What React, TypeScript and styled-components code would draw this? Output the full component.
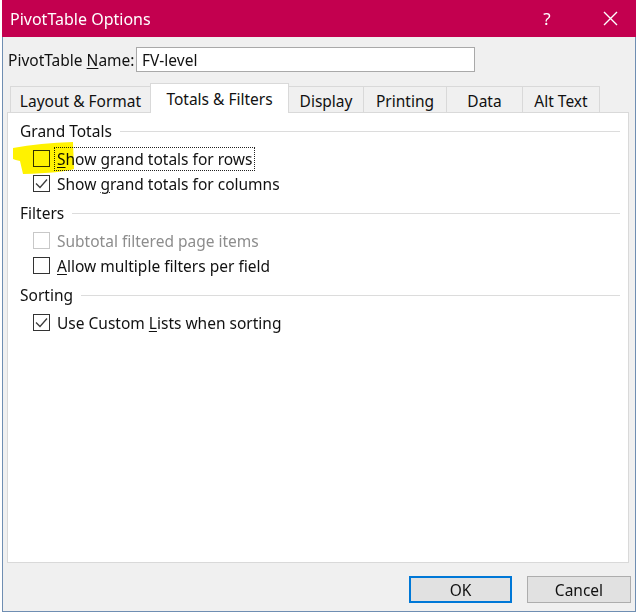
import React from 'react'
import styled, { createGlobalStyle } from 'styled-components'

const GlobalStyle = createGlobalStyle`
	html, body {
		margin: 0;
		padding: 0;
		background: #fff;
	}
	body {
		font-family: 'Noto Sans', 'Open Sans', sans-serif;
		font-size: 15.5px;
		color: #111;
	}
	u {
		text-decoration-thickness: 1px;
		text-underline-offset: 2px;
	}
`

const Window = styled.div`
	margin-left: 2px;
	width: 634px;
	height: 612px;
	box-sizing: border-box;
	border: 1px solid #6f8eb2;
	border-top: none;
	background: #f0f0f0;
	display: flex;
	flex-direction: column;
`
const TitleBar = styled.div`
	flex: none;
	height: 37px;
	margin: 0 -1px;
	background: #c3004f;
	color: #fff;
	display: flex;
	align-items: center;
	padding-left: 8px;
	font-size: 16px;
`
const Title = styled.div`
	flex: 1;
`
const TitleButton = styled.div<{ $w: number }>`
	width: ${p => p.$w}px;
	height: 37px;
	display: flex;
	align-items: center;
	justify-content: center;
	font-size: 17px;
`
const NameRow = styled.div`
	display: flex;
	align-items: center;
	height: 25px;
	margin: 10px 0 0 5px;
`
const NameLabel = styled.div`
	width: 128px;
`
const NameInput = styled.div`
	width: 339px;
	height: 25px;
	box-sizing: border-box;
	border: 1px solid #a9a9a9;
	background: #fff;
	padding-left: 5px;
	display: flex;
	align-items: center;
`
const TabStrip = styled.div`
	display: flex;
	align-items: flex-end;
	height: 30px;
	margin: 11px 0 -1px 7px;
	position: relative;
	z-index: 1;
`
const Tab = styled.div<{ $w: number; $active?: boolean }>`
	width: ${p => p.$w}px;
	height: ${p => (p.$active ? 30 : 26)}px;
	margin-bottom: ${p => (p.$active ? 0 : 1)}px;
	box-sizing: border-box;
	border: 1px solid #d9d9d9;
	border-bottom: none;
	background: ${p => (p.$active ? '#fff' : '#f0f0f0')};
	display: flex;
	align-items: center;
	justify-content: center;
	padding-top: ${p => (p.$active ? 0 : 2)}px;
	& + & {
		margin-left: -1px;
	}
`
const Panel = styled.div`
	flex: 1;
	margin: 0 6px 0 4px;
	border: 1px solid #d9d9d9;
	background: #fff;
	padding: 6px 8px 0 12px;
	position: relative;
`
const Group = styled.div`
	margin-bottom: 5px;
`
const GroupHeader = styled.div`
	height: 24px;
	margin-bottom: 3px;
	display: flex;
	align-items: center;
	gap: 8px;
	&::after {
		content: '';
		flex: 1;
		height: 1px;
		background: #dcdcdc;
	}
`
const Row = styled.div<{ $disabled?: boolean }>`
	height: 25px;
	display: flex;
	align-items: center;
	gap: 4px;
	padding-left: 13px;
	color: ${p => (p.$disabled ? '#8d8d8d' : 'inherit')};
`
const Box = styled.div<{ $disabled?: boolean }>`
	width: 17px;
	height: 17px;
	box-sizing: border-box;
	border: 1px solid ${p => (p.$disabled ? '#c8c8c8' : '#333')};
	background: #fff;
	display: flex;
	align-items: center;
	justify-content: center;
`
const RowText = styled.span<{ $focus?: boolean }>`
	line-height: 20px;
	padding: 1px 2px;
	border: 1px dotted ${p => (p.$focus ? '#222' : 'transparent')};
`
const Marker = styled.svg`
	position: absolute;
	left: 4px;
	top: 29px;
	mix-blend-mode: multiply;
	pointer-events: none;
`
const ButtonBar = styled.div`
	flex: none;
	display: flex;
	justify-content: flex-end;
	gap: 15px;
	padding: 13px 4px 8px;
`
const Button = styled.div<{ $w: number; $default?: boolean }>`
	width: ${p => p.$w}px;
	height: 27px;
	box-sizing: border-box;
	background: #e1e1e1;
	border: ${p => (p.$default ? '2px solid #0078d7' : '1px solid #adadad')};
	display: flex;
	align-items: center;
	justify-content: center;
`

const Check = () => (
	<svg width='15' height='15' viewBox='0 0 15 15'>
		<polyline points='2,7.5 6,11.5 13,3.5' fill='none' stroke='#3a3a3a' strokeWidth='1.3' />
	</svg>
)

type Option = { text: React.ReactNode; checked?: boolean; disabled?: boolean; focus?: boolean }

const groups: { title: string; options: Option[] }[] = [
	{
		title: 'Grand Totals',
		options: [
			{ text: <><u>S</u>how grand totals for rows</>, focus: true },
			{ text: <>Show <u>g</u>rand totals for columns</>, checked: true },
		],
	},
	{
		title: 'Filters',
		options: [
			{ text: 'Subtotal filtered page items', disabled: true },
			{ text: <><u>A</u>llow multiple filters per field</> },
		],
	},
	{
		title: 'Sorting',
		options: [
			{ text: <>Use Custom <u>L</u>ists when sorting</>, checked: true },
		],
	},
]

const tabs = [
	{ label: 'Layout & Format', w: 141 },
	{ label: 'Totals & Filters', w: 139, active: true },
	{ label: 'Display', w: 76 },
	{ label: 'Printing', w: 84 },
	{ label: 'Data', w: 77 },
	{ label: 'Alt Text', w: 78 },
]

export default function App() {
	return <>
		<GlobalStyle />
		<Window>
			<TitleBar>
				<Title>PivotTable Options</Title>
				<TitleButton $w={46}>?</TitleButton>
				<TitleButton $w={14} />
				<TitleButton $w={52}>
					<svg width='15' height='15' viewBox='0 0 15 15'>
						<path d='M1 1 L14 14 M14 1 L1 14' stroke='#fff' strokeWidth='1.4' />
					</svg>
				</TitleButton>
			</TitleBar>
			<NameRow>
				<NameLabel>PivotTable <u>N</u>ame:</NameLabel>
				<NameInput>FV-level</NameInput>
			</NameRow>
			<TabStrip>
				{tabs.map(t => (
					<Tab key={t.label} $w={t.w} $active={t.active}>{t.label}</Tab>
				))}
			</TabStrip>
			<Panel>
				{groups.map(g => (
					<Group key={g.title}>
						<GroupHeader>{g.title}</GroupHeader>
						{g.options.map((o, i) => (
							<Row key={i} $disabled={o.disabled}>
								<Box $disabled={o.disabled}>{o.checked && <Check />}</Box>
								<RowText $focus={o.focus}>{o.text}</RowText>
							</Row>
						))}
					</Group>
				))}
				<Marker width='64' height='33' viewBox='0 0 64 33'>
					<path d='M1 6 Q28 1 61 0 L62 27 Q50 31 11 32 L8 19 Q3 18 1 17 Z' fill='#fff200' />
				</Marker>
			</Panel>
			<ButtonBar>
				<Button $w={103} $default>OK</Button>
				<Button $w={104}>Cancel</Button>
			</ButtonBar>
		</Window>
	</>
}
